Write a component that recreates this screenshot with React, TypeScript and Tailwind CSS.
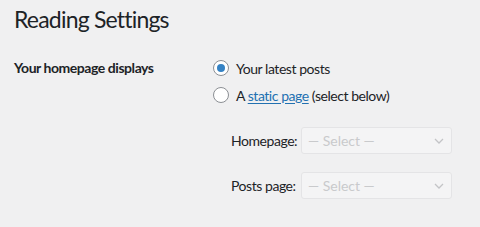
import React from "react";

function Chevron() {
  return (
    <svg width="16" height="16" viewBox="0 0 20 20" className="shrink-0">
      <path d="M5 7.5l5 5 5-5" fill="none" stroke="#c3c4c7" strokeWidth="1.6" />
    </svg>
  );
}

function Select() {
  return (
    <div className="flex h-[27px] w-[151px] items-center justify-between rounded-[3px] border border-[#e4e4e6] bg-[#f4f4f5] pl-[6px] pr-[4px]">
      <span className="text-[14px] tracking-normal text-[#c9cacc]">— Select —</span>
      <Chevron />
    </div>
  );
}

function Radio({ checked }: { checked?: boolean }) {
  return (
    <span className="flex h-[16px] w-[16px] shrink-0 items-center justify-center rounded-full border border-[#8c8f94] bg-white">
      {checked && <span className="h-[8px] w-[8px] rounded-full bg-[#3582c4]" />}
    </span>
  );
}

export default function App() {
  return (
    <div
      className="h-[227px] w-[480px] overflow-hidden bg-[#f0f0f1] pl-[14px] text-[14px] tracking-[-0.45px] text-[#1d2327]"
      style={{ fontFamily: 'Lato, "Noto Sans", sans-serif' }}
    >
      <h1 className="pt-[4px] text-[23px] font-normal leading-[30px] tracking-[-0.8px]">Reading Settings</h1>
      <div className="mt-[24px] flex">
        <div className="w-[199px] shrink-0 whitespace-nowrap font-bold leading-[20px]">Your homepage displays</div>
        <div className="flex flex-col">
          <div className="flex h-[20px] items-center gap-[7px]">
            <Radio checked />
            <span className="whitespace-nowrap">Your latest posts</span>
          </div>
          <div className="mt-[7px] flex h-[20px] items-center gap-[7px]">
            <Radio />
            <span className="whitespace-nowrap">
              A <span className="text-[#2271b1] underline underline-offset-2">static page</span> (select below)
            </span>
          </div>
          <div className="ml-[18px] mt-[22px] flex items-center">
            <span className="w-[70px] whitespace-nowrap">Homepage:</span>
            <Select />
          </div>
          <div className="ml-[18px] mt-[18px] flex items-center">
            <span className="w-[70px] whitespace-nowrap">Posts page:</span>
            <Select />
          </div>
        </div>
      </div>
    </div>
  );
}
